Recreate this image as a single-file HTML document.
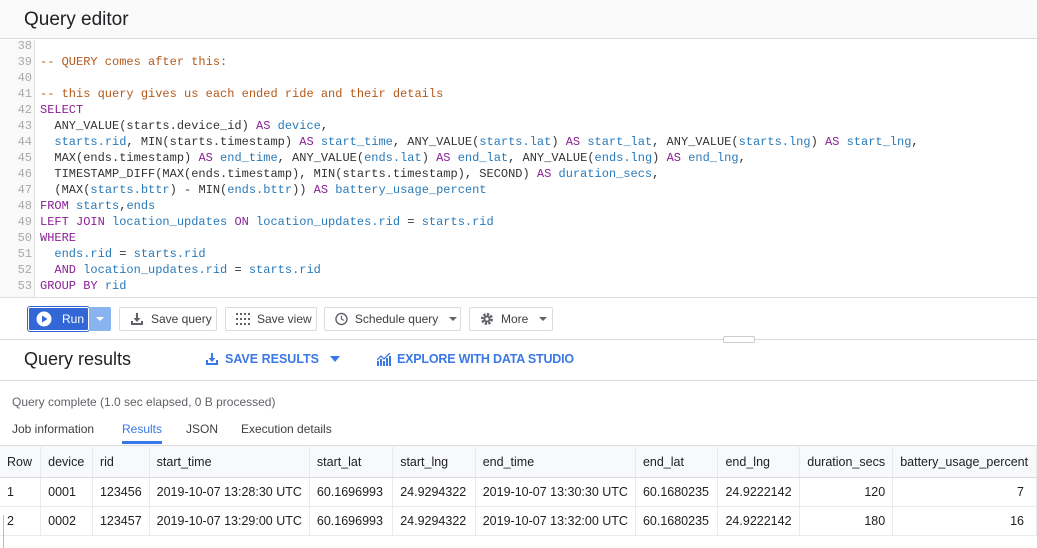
<!DOCTYPE html>
<html><head><meta charset="utf-8"><style>
*{margin:0;padding:0;box-sizing:border-box}
body{width:1037px;height:548px;overflow:hidden;background:#fff;font-family:"Liberation Sans",Roboto,sans-serif;color:#202124;position:relative}
.abs{position:absolute}
#hdr{left:0;top:0;width:1037px;height:39px;background:#fafafa;border-bottom:1px solid #dadce0}
#hdr span{position:absolute;left:24px;top:9px;font-size:19px;color:#202124}
#gut{left:0;top:40px;width:35px;height:258px;background:#f9f9f9;border-right:1px solid #e4e4e4}
.ln{position:absolute;left:0;width:32px;text-align:right;font:12px/16px "Liberation Mono",monospace;color:#aaa}
.cl{position:absolute;left:40px;font:12px/16px "Liberation Mono",monospace;color:#333;white-space:pre}
.c{color:#b35a1b}.k{color:#8a2096}.v{color:#2a7ab8}
#edb{left:0;top:297px;width:1037px;border-top:1px solid #ddd}
.btn{position:absolute;top:307px;height:24px;border:1px solid #dadce0;border-radius:2px;background:#fff;font-size:12px;color:#3c4043;display:flex;align-items:center;gap:7px;padding-left:10px;white-space:nowrap}
.line{position:absolute;left:0;width:1037px;border-top:1px solid #dadce0}
.blue{color:#3b78e7;font-size:12.5px;font-weight:bold;white-space:nowrap}
table{position:absolute;left:0;top:445px;border-collapse:collapse;font-size:12.5px}
td,th{height:29px;padding:0 7px;border:1px solid #e8eaed;text-align:left;font-weight:normal;white-space:nowrap}
th{height:32px;background:#f8f9fa;border-top:1px solid #dadce0;border-bottom:1px solid #dadce0}
tr td:first-child,tr th:first-child{border-left:none}
.r{text-align:right}
</style></head><body>
<div id="hdr" class="abs"><span>Query editor</span></div>
<div id="gut" class="abs"></div>
<div class="abs" style="left:0;top:38px;width:1037px;height:260px">
<div class="ln" style="top:0">38</div><div class="ln" style="top:16px">39</div><div class="ln" style="top:32px">40</div><div class="ln" style="top:48px">41</div><div class="ln" style="top:64px">42</div><div class="ln" style="top:80px">43</div><div class="ln" style="top:96px">44</div><div class="ln" style="top:112px">45</div><div class="ln" style="top:128px">46</div><div class="ln" style="top:144px">47</div><div class="ln" style="top:160px">48</div><div class="ln" style="top:176px">49</div><div class="ln" style="top:192px">50</div><div class="ln" style="top:208px">51</div><div class="ln" style="top:224px">52</div><div class="ln" style="top:240px">53</div>
<div class="cl c" style="top:16px">-- QUERY comes after this:</div>
<div class="cl c" style="top:48px">-- this query gives us each ended ride and their details</div>
<div class="cl k" style="top:64px">SELECT</div>
<div class="cl" style="top:80px">  ANY_VALUE(starts.device_id) <span class="k">AS</span> <span class="v">device</span>,</div>
<div class="cl" style="top:96px">  <span class="v">starts.rid</span>, MIN(starts.timestamp) <span class="k">AS</span> <span class="v">start_time</span>, ANY_VALUE(<span class="v">starts.lat</span>) <span class="k">AS</span> <span class="v">start_lat</span>, ANY_VALUE(<span class="v">starts.lng</span>) <span class="k">AS</span> <span class="v">start_lng</span>,</div>
<div class="cl" style="top:112px">  MAX(ends.timestamp) <span class="k">AS</span> <span class="v">end_time</span>, ANY_VALUE(<span class="v">ends.lat</span>) <span class="k">AS</span> <span class="v">end_lat</span>, ANY_VALUE(<span class="v">ends.lng</span>) <span class="k">AS</span> <span class="v">end_lng</span>,</div>
<div class="cl" style="top:128px">  TIMESTAMP_DIFF(MAX(ends.timestamp), MIN(starts.timestamp), SECOND) <span class="k">AS</span> <span class="v">duration_secs</span>,</div>
<div class="cl" style="top:144px">  (MAX(<span class="v">starts.bttr</span>) - MIN(<span class="v">ends.bttr</span>)) <span class="k">AS</span> <span class="v">battery_usage_percent</span></div>
<div class="cl" style="top:160px"><span class="k">FROM</span> <span class="v">starts</span>,<span class="v">ends</span></div>
<div class="cl" style="top:176px"><span class="k">LEFT JOIN</span> <span class="v">location_updates</span> <span class="k">ON</span> <span class="v">location_updates.rid</span> = <span class="v">starts.rid</span></div>
<div class="cl k" style="top:192px">WHERE</div>
<div class="cl" style="top:208px">  <span class="v">ends.rid</span> = <span class="v">starts.rid</span></div>
<div class="cl" style="top:224px">  <span class="k">AND</span> <span class="v">location_updates.rid</span> = <span class="v">starts.rid</span></div>
<div class="cl" style="top:240px"><span class="k">GROUP BY</span> <span class="v">rid</span></div>
</div>
<div id="edb" class="abs"></div>
<div class="abs" style="left:28px;top:307px;width:61px;height:24px;background:#3367d6;border:1px solid #fff;outline:1px solid #3367d6;color:#fff;font-size:12px;display:flex;align-items:center;gap:10px;padding-left:7px;border-radius:2px">
<svg width="16" height="16" viewBox="0 0 16 16"><circle cx="8" cy="8" r="7.5" fill="#fff"/><path d="M6 4.5v7l5.5-3.5z" fill="#3367d6"/></svg>Run</div>
<div class="abs" style="left:89px;top:307px;width:22px;height:24px;background:#8ab4f0;border-radius:0 2px 2px 0"><svg width="22" height="24"><path d="M7 10h8l-4 4z" fill="#fff"/></svg></div>
<div class="btn" style="left:119px;width:98px"><svg width="14" height="14" viewBox="0 0 14 14"><path d="M1 9v4h12V9h-2v2H3V9zM6 1h2v5h2.5L7 10 3.5 6H6z" fill="#5f6368"/></svg>Save query</div>
<div class="btn" style="left:225px;width:92px"><svg width="14" height="12" viewBox="0 0 14 12"><g fill="#5f6368"><rect x="0" y="0" width="2" height="2"/><rect x="4" y="0" width="2" height="2"/><rect x="8" y="0" width="2" height="2"/><rect x="12" y="0" width="2" height="2"/><rect x="0" y="5" width="2" height="2"/><rect x="4" y="5" width="2" height="2"/><rect x="8" y="5" width="2" height="2"/><rect x="12" y="5" width="2" height="2"/><rect x="0" y="10" width="2" height="2"/><rect x="4" y="10" width="2" height="2"/><rect x="8" y="10" width="2" height="2"/><rect x="12" y="10" width="2" height="2"/></g></svg>Save view</div>
<div class="btn" style="left:324px;width:137px"><svg width="14" height="14" viewBox="0 0 14 14"><circle cx="7" cy="7" r="6" fill="none" stroke="#5f6368" stroke-width="1.5"/><path d="M7 3.5V7l2.5 1.5" fill="none" stroke="#5f6368" stroke-width="1.3"/></svg>Schedule query<svg width="16" height="10"><path d="M4 3h8l-4 4z" fill="#5f6368"/></svg></div>
<div class="btn" style="left:469px;width:84px"><svg width="14" height="14" viewBox="0 0 14 14"><circle cx="7" cy="7" r="4.5" fill="none" stroke="#5f6368" stroke-width="3" stroke-dasharray="2.2 1.3"/><circle cx="7" cy="7" r="3.5" fill="#5f6368"/><circle cx="7" cy="7" r="1.6" fill="#fff"/></svg>More<svg width="16" height="10"><path d="M4 3h8l-4 4z" fill="#5f6368"/></svg></div>
<div class="line" style="top:339px"></div>
<div class="abs" style="left:723px;top:336px;width:32px;height:7px;border:1px solid #ccc;border-radius:2px;background:#fff"></div>
<div class="abs" style="left:24px;top:349px;font-size:18px">Query results</div>
<div class="abs blue" style="left:205px;top:352px;display:flex;align-items:center;gap:6px"><svg width="14" height="14" viewBox="0 0 14 14"><path d="M1 8v5h12V8h-2v3H3V8zM6 1h2v5h2.5L7 10 3.5 6H6z" fill="#3b78e7"/></svg>SAVE RESULTS<svg width="20" height="10"><path d="M5 2h10l-5 6z" fill="#3b78e7"/></svg></div>
<div class="abs blue" style="left:377px;top:352px;display:flex;align-items:center;gap:6px;letter-spacing:-0.2px"><svg width="14" height="13" viewBox="0 0 14 13"><g fill="#3b78e7"><rect x="0" y="8" width="2" height="5"/><rect x="3" y="6" width="2" height="7"/><rect x="6" y="8" width="2" height="5"/><rect x="9" y="5" width="2" height="8"/><rect x="12" y="3" width="2" height="10"/></g><path d="M0 7l4-4 3 3 6-6" fill="none" stroke="#3b78e7" stroke-width="1.3"/></svg>EXPLORE WITH DATA STUDIO</div>
<div class="line" style="top:380px"></div>
<div class="abs" style="left:12px;top:395px;font-size:12px;color:#5f6368">Query complete (1.0 sec elapsed, 0 B processed)</div>
<div class="abs" style="left:12px;top:422px;font-size:12px;color:#3c4043">Job information</div>
<div class="abs" style="left:122px;top:422px;font-size:12px;color:#3b78e7">Results</div>
<div class="abs" style="left:122px;top:441px;width:40px;height:3px;background:#3b78e7"></div>
<div class="abs" style="left:186px;top:422px;font-size:12px;color:#3c4043">JSON</div>
<div class="abs" style="left:241px;top:422px;font-size:12px;color:#3c4043">Execution details</div>
<table>
<tr><th style="width:41px">Row</th><th style="width:52px">device</th><th style="width:56px">rid</th><th style="width:159px">start_time</th><th style="width:84px">start_lat</th><th style="width:83px">start_lng</th><th style="width:160px">end_time</th><th style="width:83px">end_lat</th><th style="width:82px">end_lng</th><th style="width:93px">duration_secs</th><th style="width:144px">battery_usage_percent</th></tr>
<tr><td>1</td><td>0001</td><td>123456</td><td>2019-10-07 13:28:30 UTC</td><td>60.1696993</td><td>24.9294322</td><td>2019-10-07 13:30:30 UTC</td><td>60.1680235</td><td>24.9222142</td><td class="r">120</td><td class="r" style="padding-right:12px">7</td></tr>
<tr><td>2</td><td>0002</td><td>123457</td><td>2019-10-07 13:29:00 UTC</td><td>60.1696993</td><td>24.9294322</td><td>2019-10-07 13:32:00 UTC</td><td>60.1680235</td><td>24.9222142</td><td class="r">180</td><td class="r" style="padding-right:12px">16</td></tr>
</table>
<div class="abs" style="left:3px;top:515px;width:1px;height:33px;background:#bbb"></div>
</body></html>
